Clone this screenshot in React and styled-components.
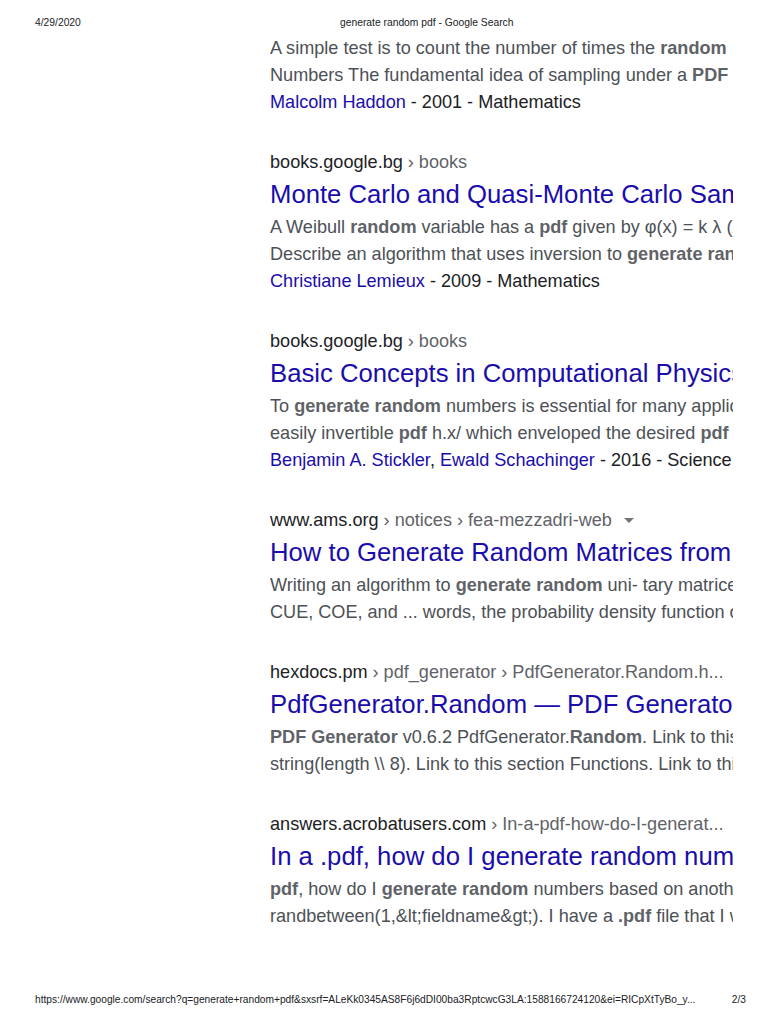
import React from 'react'
import styled, { createGlobalStyle } from 'styled-components'

const GlobalStyle = createGlobalStyle`
  html, body {
    margin: 0;
    padding: 0;
    background: #ffffff;
  }
  body {
    font-family: "Liberation Sans", Arial, sans-serif;
  }
`

const Page = styled.div`
  width: 768px;
  min-height: 1024px;
  display: flex;
  flex-direction: column;
  background: #fff;
`

const PrintHeader = styled.div`
  display: flex;
  padding: 17px 0 0 35px;
  height: 17.5px;
  font-size: 10.3px;
  line-height: 12px;
  color: #202124;
`

const HeaderDate = styled.span`
  width: 305px;
`

const PrintFooter = styled.div`
  margin-top: auto;
  display: flex;
  justify-content: space-between;
  padding: 0 22px 18px 35px;
  font-size: 10.2px;
  line-height: 12px;
  color: #202124;
  white-space: nowrap;
`

const Results = styled.div`
  margin-left: 270px;
  width: 463px;
  overflow: hidden;
  display: flex;
  flex-direction: column;
  gap: 33px;
`

const Result = styled.div`
  display: flex;
  flex-direction: column;
  white-space: nowrap;
`

const Cite = styled.div`
  display: flex;
  align-items: center;
  font-size: 18.1px;
  line-height: 26px;
  color: #202124;
`

const Crumbs = styled.span`
  color: #5f6368;
  margin-left: 5px;
`

const Caret = styled.span`
  width: 0;
  height: 0;
  margin-left: 12px;
  margin-top: 2px;
  border-left: 5px solid transparent;
  border-right: 5px solid transparent;
  border-top: 5px solid #70757a;
`

const Title = styled.div`
  font-size: 25.7px;
  line-height: 39px;
  color: #1a0dab;
`

const Line = styled.div`
  font-size: 18.1px;
  line-height: 27px;
  color: ${p => (p.$meta ? '#202124' : '#4d5156')};

  b {
    color: #5f6368;
    font-weight: bold;
  }
`

const Author = styled.span`
  color: #1a0dab;
`

const results = [
  {
    cite: 'books.google.bg',
    crumbs: '› books',
    title: 'Monte Carlo and Quasi-Monte Carlo Sampling',
    lines: [
      <>A Weibull <b>random</b> variable has a <b>pdf</b> given by φ(x) = k λ (λx)</>,
      <>Describe an algorithm that uses inversion to <b>generate random</b></>
    ],
    authors: ['Christiane Lemieux'],
    meta: ' - 2009 - Mathematics'
  },
  {
    cite: 'books.google.bg',
    crumbs: '› books',
    title: 'Basic Concepts in Computational Physics',
    lines: [
      <>To <b>generate random</b> numbers is essential for many applications</>,
      <>easily invertible <b>pdf</b> h.x/ which enveloped the desired <b>pdf</b> f</>
    ],
    authors: ['Benjamin A. Stickler', 'Ewald Schachinger'],
    meta: ' - 2016 - Science'
  },
  {
    cite: 'www.ams.org',
    crumbs: '› notices › fea-mezzadri-web',
    caret: true,
    title: 'How to Generate Random Matrices from the Classical',
    lines: [
      <>Writing an algorithm to <b>generate random</b> uni- tary matrices</>,
      <>CUE, COE, and ... words, the probability density function of</>
    ]
  },
  {
    cite: 'hexdocs.pm',
    crumbs: '› pdf_generator › PdfGenerator.Random.h...',
    title: 'PdfGenerator.Random — PDF Generator v0.6.2',
    lines: [
      <><b>PDF Generator</b> v0.6.2 PdfGenerator.<b>Random</b>. Link to this</>,
      <>string(length \\ 8). Link to this section Functions. Link to this</>
    ]
  },
  {
    cite: 'answers.acrobatusers.com',
    crumbs: '› In-a-pdf-how-do-I-generat...',
    title: 'In a .pdf, how do I generate random numbers',
    lines: [
      <><b>pdf</b>, how do I <b>generate random</b> numbers based on another</>,
      <>randbetween(1,&amp;lt;fieldname&amp;gt;). I have a <b>.pdf</b> file that I want</>
    ]
  }
]

export default function App () {
  return (
    <>
      <GlobalStyle />
      <Page>
        <PrintHeader>
          <HeaderDate>4/29/2020</HeaderDate>
          <span>generate random pdf - Google Search</span>
        </PrintHeader>
        <Results>
          <Result>
            <Line>A simple test is to count the number of times the <b>random</b></Line>
            <Line>Numbers The fundamental idea of sampling under a <b>PDF</b></Line>
            <Line $meta><Author>Malcolm Haddon</Author> - 2001 - Mathematics</Line>
          </Result>
          {results.map((r, i) => (
            <Result key={i}>
              <Cite>
                {r.cite}
                <Crumbs>{r.crumbs}</Crumbs>
                {r.caret && <Caret />}
              </Cite>
              <Title>{r.title}</Title>
              {r.lines.map((l, j) => <Line key={j}>{l}</Line>)}
              {r.authors && (
                <Line $meta>
                  {r.authors.map((a, k) => (
                    <React.Fragment key={k}>
                      {k > 0 && ', '}
                      <Author>{a}</Author>
                    </React.Fragment>
                  ))}
                  {r.meta}
                </Line>
              )}
            </Result>
          ))}
        </Results>
        <PrintFooter>
          <span>https://www.google.com/search?q=generate+random+pdf&amp;sxsrf=ALeKk0345AS8F6j6dDI00ba3RptcwcG3LA:1588166724120&amp;ei=RICpXtTyBo_y...</span>
          <span>2/3</span>
        </PrintFooter>
      </Page>
    </>
  )
}
